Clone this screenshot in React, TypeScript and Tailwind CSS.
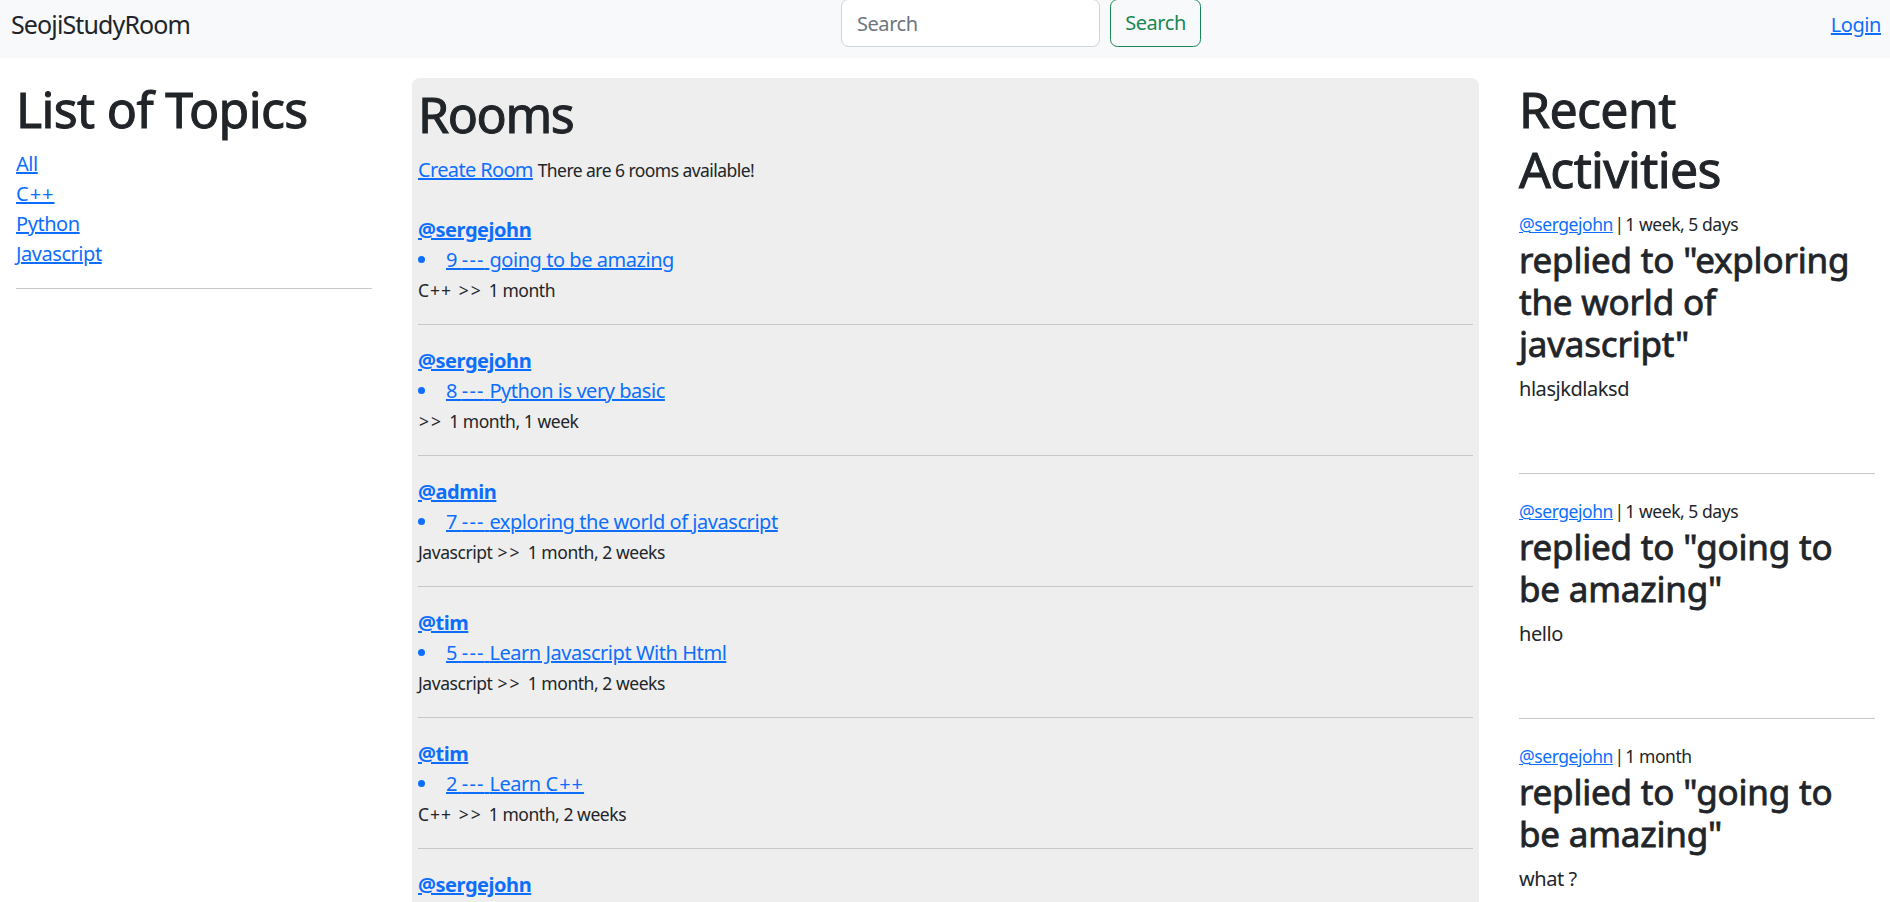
const FONT = "font-['Noto_Sans',sans-serif]";

const topics = ["All", "C++", "Python", "Javascript"];

const rooms = [
  { user: "@sergejohn", no: "9", title: "going to be amazing", topic: "C++", when: "1 month" },
  { user: "@sergejohn", no: "8", title: "Python is very basic", topic: "", when: "1 month, 1 week" },
  { user: "@admin", no: "7", title: "exploring the world of javascript", topic: "Javascript", when: "1 month, 2 weeks" },
  { user: "@tim", no: "5", title: "Learn Javascript With Html", topic: "Javascript", when: "1 month, 2 weeks" },
  { user: "@tim", no: "2", title: "Learn C++", topic: "C++", when: "1 month, 2 weeks" },
  { user: "@sergejohn", no: "1", title: "Learn Python", topic: "Python", when: "1 month, 2 weeks" },
];

const activities = [
  { when: "1 week, 5 days", text: 'replied to "exploring the world of javascript"', body: "hlasjkdlaksd" },
  { when: "1 week, 5 days", text: 'replied to "going to be amazing"', body: "hello" },
  { when: "1 month", text: 'replied to "going to be amazing"', body: "what ?" },
];

const link = "text-[#0d6efd] underline";
const rule = "h-px border-0 bg-[#c8c8c8]";
const h1 = "text-[50px] leading-[60px] font-normal text-[#212529] [-webkit-text-stroke:1px]";

export default function App() {
  return (
    <div className={`h-screen overflow-hidden bg-white text-[20px] leading-[30px] text-[#212529] tracking-[-0.45px] ${FONT}`}>
      <nav className="flex h-[58px] items-start bg-[#f8f9fa] pl-[11px] pr-[9px]">
        <span className="mt-[9px] w-[830px] shrink-0 text-[25px] leading-[30px] tracking-[-0.88px]">SeojiStudyRoom</span>
        <form className="-mt-px flex gap-[10px]">
          <input
            placeholder="Search"
            className="h-[48px] w-[259px] rounded-[7.5px] border border-[#ced4da] bg-white px-[15px] text-[20px] placeholder:text-[#6c757d] outline-none"
          />
          <button
            type="button"
            className="h-[48px] w-[91px] rounded-[7.5px] border border-[#198754] text-[20px] text-[#198754]"
          >
            Search
          </button>
        </form>
        <a href="#" className={`ml-auto mt-[10px] ${link}`}>Login</a>
      </nav>

      <div className="flex h-[844px] pt-[20px]">
        <aside className="w-[387px] shrink-0 pl-[16px] pr-[15px]">
          <h1 className={`${h1} mb-[10px] mt-px tracking-[-0.65px]`}>List of Topics</h1>
          <div className="flex flex-col items-start">
            {topics.map((t) => (
              <a key={t} href="#" className={`${link} ${t === "C++" ? "tracking-[1px]" : ""}`}>{t}</a>
            ))}
          </div>
          <hr className={`${rule} mt-[19px]`} />
        </aside>

        <main className="ml-[25px] w-[1067px] shrink-0 rounded-t-[7.5px] bg-[#eeeeee] px-[6px] pt-[6px]">
          <h1 className={`${h1} mb-[10px] tracking-[-1.4px]`}>Rooms</h1>
          <div className="mb-[30px] pt-px">
            <a href="#" className={`${link} tracking-[-0.65px]`}>Create Room</a>{" "}
            <small className="text-[17.5px] tracking-[-0.55px]">There are 6 rooms available!</small>
          </div>
          {rooms.map((r, i) => (
            <div key={i} className="h-[131px]">
              <a href="#" className={`block w-fit font-bold ${link}`}>{r.user}</a>
              <ul className="list-inside list-disc marker:text-[#0d6efd]">
                <li>
                  <a href="#" className={link}>
                    {r.no} <span className="tracking-[1.2px]">---</span>{" "}
                    {r.title.endsWith("C++") ? (
                      <>Learn <span className="tracking-[1px]">C++</span></>
                    ) : (
                      <span className="tracking-[-0.45px]">{r.title}</span>
                    )}
                  </a>
                </li>
              </ul>
              <small className="block text-[17.5px] leading-[30px]">
                {r.topic && <span className={r.topic === "C++" ? "tracking-[1px]" : ""}>{r.topic} </span>}
                <span className="mr-[2px] ml-[1px] tracking-[2px]">&gt;&gt;</span> {r.when}
              </small>
              <hr className={`${rule} mt-[19px]`} />
            </div>
          ))}
        </main>

        <aside className="ml-[25px] w-[371px] shrink-0 pl-[15px]">
          <h1 className={`${h1} mb-[10px] mt-px tracking-[-0.65px]`}>Recent<br />Activities</h1>
          {activities.map((a, i) => (
            <div key={i} className="mb-[22px]">
              <small className="block text-[17.5px] leading-[30px]">
                <a href="#" className={link}>@sergejohn</a> <span className="-mx-[2.5px]">|</span> {a.when}
              </small>
              <h3 className="mb-[9px] max-w-[340px] text-[35px] leading-[42px] font-normal tracking-[-0.2px] [-webkit-text-stroke:0.8px]">{a.text}</h3>
              <p className="mb-[69px]">{a.body}</p>
              <hr className={rule} />
            </div>
          ))}
        </aside>
      </div>
    </div>
  );
}
